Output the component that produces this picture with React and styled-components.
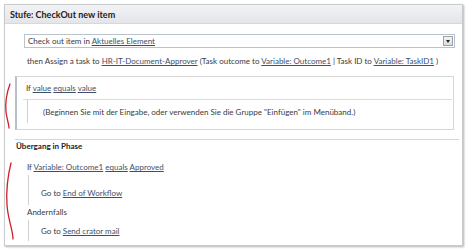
import React from "react";
import styled, { createGlobalStyle } from "styled-components";

const Global = createGlobalStyle`
  body {
    margin: 0;
    background: #ffffff;
    font-family: Lato, "Open Sans", sans-serif;
    color: #3a3a3a;
  }
`;

const Page = styled.div`
  position: relative;
  width: 474px;
  height: 251px;
  padding: 4px 0 0 4px;
  box-sizing: border-box;
`;

const Panel = styled.div`
  width: 459px;
  height: 242px;
  box-sizing: border-box;
  border: 1px solid #c9cacc;
  box-shadow: 1px 1px 2px rgba(0, 0, 0, 0.3);
  background: #fff;
  display: flex;
  flex-direction: column;
`;

const Header = styled.div`
  height: 18px;
  display: flex;
  align-items: center;
  padding-left: 5px;
  background: linear-gradient(#f2f3f5, #e3e5e8);
  border-bottom: 1px solid #d6d8db;
  font-size: 9px;
  font-weight: 700;
  color: #222;
`;

const Body = styled.div`
  display: flex;
  flex-direction: column;
  padding: 10px 0 0 9px;
`;

const Select = styled.div`
  margin-left: 10px;
  width: 431px;
  height: 14px;
  box-sizing: border-box;
  border: 1px solid #b8c3ce;
  display: flex;
  align-items: center;
  justify-content: space-between;
  padding-left: 3px;
  padding-right: 1px;
  font-size: 8px;
`;

const DropButton = styled.div`
  width: 10px;
  height: 10px;
  box-sizing: border-box;
  border: 1px solid #9aa3ad;
  background: linear-gradient(#f4f4f4, #dcdcdc);
  display: flex;
  align-items: center;
  justify-content: center;
  &::after {
    content: "";
    border-left: 2.5px solid transparent;
    border-right: 2.5px solid transparent;
    border-top: 3px solid #222;
  }
`;

const Line = styled.div`
  font-size: 8px;
  line-height: 12px;
  white-space: nowrap;
  margin-left: ${(p) => p.$indent || 0}px;
  margin-top: ${(p) => p.$top || 0}px;
  font-weight: ${(p) => (p.$bold ? 700 : 400)};
  color: ${(p) => (p.$bold ? "#222" : "#3a3a3a")};
`;

const Link = styled.span`
  color: #3d4f6a;
  text-decoration: underline;
  text-underline-offset: 1px;
`;

const IfBox = styled.div`
  margin-top: 9px;
  margin-left: 1px;
  width: 439px;
  height: 54px;
  box-sizing: border-box;
  border: 1px solid #d6d6d6;
  border-left: 2px solid #b9bfca;
  display: flex;
  flex-direction: column;
  padding: 5px 0 0 9px;
`;

const Divider = styled.div`
  height: 1px;
  background: #dcdcdc;
  margin: 5px 1px 0 -3px;
`;

const Branch = styled.div`
  border-left: 1px solid #d0d0d0;
  margin-left: ${(p) => p.$indent || 1}px;
  margin-top: ${(p) => p.$top || 0}px;
  height: ${(p) => p.$h}px;
  box-sizing: border-box;
  display: flex;
  align-items: flex-start;
  padding-top: ${(p) => p.$padTop || 0}px;
  padding-left: ${(p) => p.$pad || 12}px;
`;

const Rule = styled.div`
  height: 1px;
  background: #d6d6d6;
  margin: 9px 3px 0 1px;
`;

const Marks = styled.svg`
  position: absolute;
  left: 0;
  top: 0;
  pointer-events: none;
`;

export default function App() {
  return (
    <Page>
      <Global />
      <Panel>
        <Header>Stufe: CheckOut new item</Header>
        <Body>
          <Select>
            <span>
              Check out item in <Link>Aktuelles Element</Link>
            </span>
            <DropButton />
          </Select>
          <Line $indent={13} $top={7}>
            then Assign a task to <Link>HR-IT-Document-Approver</Link> (Task
            outcome to <Link>Variable: Outcome1</Link> | Task ID to{" "}
            <Link>Variable: TaskID1</Link> )
          </Line>
          <IfBox>
            <Line>
              If <Link>value</Link> <Link>equals</Link> <Link>value</Link>
            </Line>
            <Divider />
            <Branch $indent={1} $h={23} $padTop={6} $pad={15}>
              <Line>
                (Beginnen Sie mit der Eingabe, oder verwenden Sie die Gruppe
                "Einfügen" im Menüband.)
              </Line>
            </Branch>
          </IfBox>
          <Rule />
          <Line $indent={2} $bold>
            Übergang in Phase
          </Line>
          <Line $indent={13} $top={9}>
            If <Link>Variable: Outcome1</Link> <Link>equals</Link>{" "}
            <Link>Approved</Link>
          </Line>
          <Branch $indent={14} $top={2} $h={30} $padTop={12} $pad={12}>
            <Line>
              Go to <Link>End of Workflow</Link>
            </Line>
          </Branch>
          <Line $indent={13} $top={1}>
            Andernfalls
          </Line>
          <Branch $indent={14} $top={2} $h={21} $padTop={5} $pad={12}>
            <Line>
              Go to <Link>Send crator mail</Link>
            </Line>
          </Branch>
        </Body>
      </Panel>
      <Marks width="474" height="251">
        <path
          d="M10 84 C 7 92, 5 102, 6 112 C 7 120, 9 124, 9 128"
          fill="none"
          stroke="#d0202a"
          strokeWidth="1.3"
          strokeLinecap="round"
        />
        <path
          d="M11 163 C 8 175, 6 190, 7 205 C 8 220, 13 230, 13 239"
          fill="none"
          stroke="#d0202a"
          strokeWidth="1.3"
          strokeLinecap="round"
        />
      </Marks>
    </Page>
  );
}
